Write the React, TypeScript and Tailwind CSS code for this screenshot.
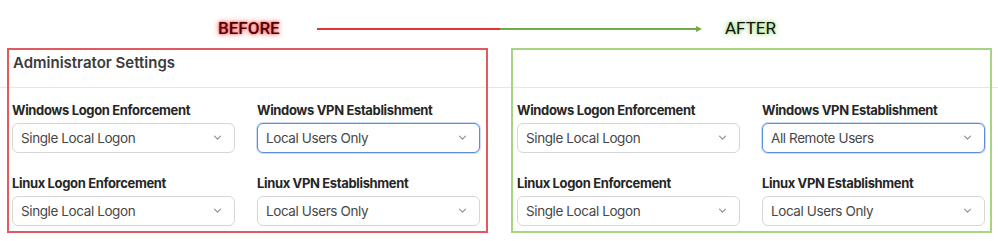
import React from "react";

function Chevron() {
  return (
    <svg width="9" height="6" viewBox="0 0 9 6" className="shrink-0">
      <polyline points="1.5,1.2 4.5,4.2 7.5,1.2" fill="none" stroke="#8f8f8f" strokeWidth="1.1" strokeLinecap="round" strokeLinejoin="round" />
    </svg>
  );
}

function Field({ label, value, focused, width }: { label: string; value: string; focused?: boolean; width: string }) {
  return (
    <div className={`flex flex-col ${width}`}>
      <div className="h-[16px] mb-[5px] text-[13px] leading-[16px] font-bold tracking-[-0.35px] text-[#262626] whitespace-nowrap">{label}</div>
      <div
        className={
          focused
            ? "h-[30px] flex items-center justify-between pl-[8px] pr-[12px] rounded-[6px] border border-[#5a8de0] bg-white shadow-[0_0_0_1px_rgba(90,141,224,0.3)]"
            : "h-[30px] flex items-center justify-between pl-[8px] pr-[12px] rounded-[6px] border border-[#d6d6d6] bg-white"
        }
      >
        <span className="text-[13.5px] leading-[20px] tracking-[-0.4px] text-[#474747]">{value}</span>
        <Chevron />
      </div>
    </div>
  );
}

function Form({ winVpn }: { winVpn: string }) {
  return (
    <div className="flex flex-col gap-y-[22px]">
      <div className="flex gap-x-[22px]">
        <Field label="Windows Logon Enforcement" value="Single Local Logon" width="w-[223px]" />
        <Field label="Windows VPN Establishment" value={winVpn} focused width="w-[223px]" />
      </div>
      <div className="flex gap-x-[22px]">
        <Field label="Linux Logon Enforcement" value="Single Local Logon" width="w-[223px]" />
        <Field label="Linux VPN Establishment" value="Local Users Only" width="w-[223px]" />
      </div>
    </div>
  );
}

export default function App() {
  return (
    <div className="relative w-[998px] h-[241px] bg-white overflow-hidden" style={{ fontFamily: "Inter, 'Noto Sans', sans-serif" }}>
      {/* annotation header */}
      <div className="h-[48px] pt-[19px]">
        <div className="flex items-center h-[20px]" style={{ fontFamily: "Roboto, 'Liberation Sans', sans-serif" }}>
          <div className="w-[317px] pl-[218px]">
            <span className="text-[17px] leading-[20px] font-medium text-[#4a0608] [text-shadow:0_0_3px_rgba(255,40,40,0.9),0_0_6px_rgba(255,60,60,0.7)]">BEFORE</span>
          </div>
          <div className="w-[183px] h-[2px] bg-[#e8323a]" />
          <div className="w-[196px] h-[2px] bg-[#70ad47]" />
          <svg width="6" height="6" viewBox="0 0 6 6" className="shrink-0">
            <polygon points="0,0 6,3 0,6" fill="#70ad47" />
          </svg>
          <div className="ml-[23px]">
            <span className="text-[17px] leading-[20px] text-[#111] [text-shadow:0_0_3px_rgba(140,210,90,0.95),0_0_6px_rgba(150,215,100,0.8)]">AFTER</span>
          </div>
        </div>
      </div>

      {/* underlying page */}
      <div className="h-[40px] border-b border-[#e6e6e6] pt-[2px] pl-[13px]">
        <span className="text-[15px] leading-[20px] font-semibold text-[#3b3b3b]">Administrator Settings</span>
      </div>
      <div className="flex pt-[14px]">
        <div className="w-[505px] pl-[12px]">
          <Form winVpn="Local Users Only" />
        </div>
        <div className="pl-[12px]">
          <Form winVpn="All Remote Users" />
        </div>
      </div>

      {/* annotation boxes */}
      <div className="absolute left-[7px] top-[48px] w-[481px] h-[185px] border-2 border-[#e25a5e] pointer-events-none" />
      <div className="absolute left-[511px] top-[48px] w-[481px] h-[185px] border-2 border-[#a6d483] pointer-events-none" />
    </div>
  );
}
